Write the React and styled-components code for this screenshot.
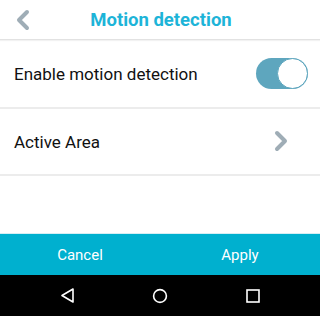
import React, { useState } from 'react'
import styled, { createGlobalStyle } from 'styled-components'

const Global = createGlobalStyle`
  html, body { margin: 0; padding: 0; background: #fff; }
  body { font-family: Roboto, "Noto Sans", sans-serif; }
`

const Screen = styled.div`
  width: 320px;
  height: 316px;
  display: flex;
  flex-direction: column;
  background: #fff;
  overflow: hidden;
`

const Header = styled.div`
  height: 39px;
  flex: none;
  display: flex;
  align-items: center;
  justify-content: center;
  position: relative;
  border-bottom: 1px solid #e2e2e2;
  box-shadow: 0 1px 1px rgba(0, 0, 0, 0.05);
`

const BackButton = styled.div`
  position: absolute;
  left: 14px;
  top: 9px;
  width: 18px;
  height: 22px;
`

const Title = styled.div`
  color: #1db4d8;
  font-size: 18.5px;
  font-weight: 700;
  margin-left: 2px;
`

const Row = styled.div`
  height: ${p => p.h}px;
  flex: none;
  display: flex;
  align-items: center;
  justify-content: space-between;
  padding: 0 12px 0 14px;
  border-bottom: 2px solid #ececec;
  font-size: 17px;
  color: #111;
`

const Track = styled.div`
  width: 52px;
  height: 31px;
  border-radius: 16px;
  background: ${p => (p.on ? '#5ea6be' : '#cfcfcf')};
  display: flex;
  justify-content: ${p => (p.on ? 'flex-end' : 'flex-start')};
  box-sizing: border-box;
`

const Knob = styled.div`
  width: 31px;
  height: 31px;
  border-radius: 50%;
  background: #fff;
  border: 1px solid #5ea6be;
  box-sizing: border-box;
`

const ArrowBox = styled.div`
  margin-right: 18px;
  margin-top: 2px;
`

const Spacer = styled.div`
  flex: 1;
`

const ActionBar = styled.div`
  height: 41px;
  flex: none;
  display: flex;
  background: #00b0cf;
  border-top: 1px solid #d6eef4;
`

const Action = styled.div`
  flex: 1;
  display: flex;
  align-items: center;
  justify-content: center;
  color: #fff;
  font-size: 15px;
`

const NavBar = styled.div`
  height: 41px;
  flex: none;
  background: #000;
  display: grid;
  grid-template-columns: repeat(3, 1fr);
  align-items: center;
  justify-items: center;
  padding: 0 20px;
`

const Chevron = ({ dir }) => (
  <svg width="18" height="22" viewBox="0 0 18 22">
    <path
      d={dir === 'left' ? 'M13 3 L5 11 L13 19' : 'M5 3 L13 11 L5 19'}
      fill="none"
      stroke="#9fadb6"
      strokeWidth="4"
      strokeLinecap="round"
      strokeLinejoin="round"
    />
  </svg>
)

export default function App() {
  const [on, setOn] = useState(true)
  return (
    <Screen>
      <Global />
      <Header>
        <BackButton>
          <Chevron dir="left" />
        </BackButton>
        <Title>Motion detection</Title>
      </Header>
      <Row h={67}>
        <span>Enable motion detection</span>
        <Track on={on} onClick={() => setOn(!on)}>
          <Knob />
        </Track>
      </Row>
      <Row h={65}>
        <span>Active Area</span>
        <ArrowBox>
          <Chevron dir="right" />
        </ArrowBox>
      </Row>
      <Spacer />
      <ActionBar>
        <Action>Cancel</Action>
        <Action>Apply</Action>
      </ActionBar>
      <NavBar>
        <svg width="16" height="17" viewBox="0 0 16 17">
          <path d="M14 2 L3 8.5 L14 15 Z" fill="none" stroke="#fff" strokeWidth="1.6" strokeLinejoin="round" />
        </svg>
        <svg width="16" height="16" viewBox="0 0 16 16">
          <circle cx="8" cy="8" r="6.4" fill="none" stroke="#fff" strokeWidth="1.6" />
        </svg>
        <svg width="16" height="16" viewBox="0 0 16 16">
          <rect x="2" y="2" width="12" height="12" fill="none" stroke="#fff" strokeWidth="1.6" />
        </svg>
      </NavBar>
    </Screen>
  )
}
